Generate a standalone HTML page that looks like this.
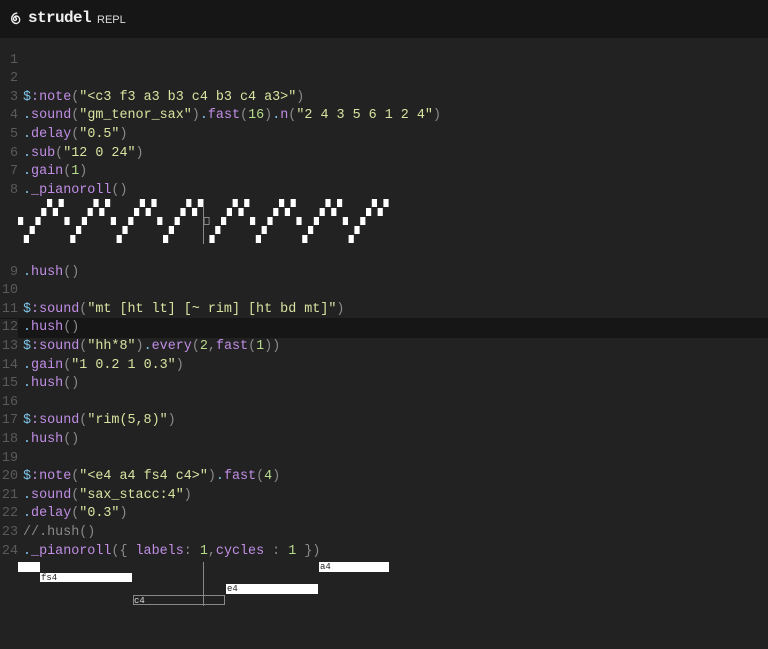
<!DOCTYPE html>
<html><head><meta charset="utf-8"><style>
*{margin:0;padding:0;box-sizing:border-box}
body{width:768px;height:649px;background:#222222;overflow:hidden;position:relative;font-family:"Liberation Mono",monospace;font-size:13.4px;color:#d0d0d0}
.hdr{position:absolute;left:0;top:0;width:768px;height:38px;background:#161616}
.hdr .t{position:absolute;left:28px;top:9px;font-family:"Liberation Mono",monospace;font-weight:bold;font-size:16px;color:#eee;letter-spacing:-0.6px}
.hdr .r{position:absolute;left:97px;top:14px;font-family:"Liberation Sans",sans-serif;font-size:11px;color:#ddd}
.l{position:absolute;left:0;height:18.6px;line-height:18.6px;white-space:pre;width:768px;margin-top:1.5px}
.n{display:inline-block;width:18px;text-align:right;color:#5a5a5a;margin-right:5px}
.d{color:#7cc2e6}.k{color:#c18ee6}.s{color:#d9e2a0}.p{color:#8a8a8a}.m{color:#b8dc8c}.c{color:#888}
.hl{background:#161616;margin-top:0;padding-top:1.5px;height:20px}
</style></head><body>
<div class="hdr">
<svg style="position:absolute;left:8px;top:12px" width="14" height="14" viewBox="0 0 14 14"><path d="M7 7 m0 -1.5 a1.5 1.5 0 1 1 -1.5 1.5 a3 3 0 0 1 3 -3 a3.8 3.8 0 0 1 0 7.5 a4.8 4.8 0 0 1 -4.8 -4.8 a5.6 5.6 0 0 1 5.6 -5.6" fill="none" stroke="#eee" stroke-width="1.4"/></svg>
<div class="t">strudel</div><div class="r">REPL</div></div>

<div class="l" style="top:50px"><span class="n">1</span></div>
<div class="l" style="top:68.6px"><span class="n">2</span></div>
<div class="l" style="top:87.2px"><span class="n">3</span><span class="d">$</span><span class="k">:note</span><span class="p">(</span><span class="s">"&lt;c3 f3 a3 b3 c4 b3 c4 a3&gt;"</span><span class="p">)</span></div>
<div class="l" style="top:105.8px"><span class="n">4</span><span class="d">.</span><span class="k">sound</span><span class="p">(</span><span class="s">"gm_tenor_sax"</span><span class="p">)</span><span class="d">.</span><span class="k">fast</span><span class="p">(</span><span class="m">16</span><span class="p">)</span><span class="d">.</span><span class="k">n</span><span class="p">(</span><span class="s">"2 4 3 5 6 1 2 4"</span><span class="p">)</span></div>
<div class="l" style="top:124.4px"><span class="n">5</span><span class="d">.</span><span class="k">delay</span><span class="p">(</span><span class="s">"0.5"</span><span class="p">)</span></div>
<div class="l" style="top:143px"><span class="n">6</span><span class="d">.</span><span class="k">sub</span><span class="p">(</span><span class="s">"12 0 24"</span><span class="p">)</span></div>
<div class="l" style="top:161.6px"><span class="n">7</span><span class="d">.</span><span class="k">gain</span><span class="p">(</span><span class="m">1</span><span class="p">)</span></div>
<div class="l" style="top:180.2px"><span class="n">8</span><span class="d">.</span><span class="k">_pianoroll</span><span class="p">()</span></div>

<svg style="position:absolute;left:0;top:0" width="768" height="649">
<defs><g id="cy" fill="#fff">
<rect x="0" y="217" width="5.2" height="8"/>
<rect x="5.8" y="235" width="5.2" height="8"/>
<rect x="11.6" y="226" width="5.2" height="8"/>
<rect x="17.4" y="217" width="5.2" height="8"/>
<rect x="23.2" y="208" width="5.2" height="8"/>
<rect x="29" y="199" width="5.2" height="8"/>
<rect x="34.8" y="208" width="5.2" height="8"/>
<rect x="40.6" y="199" width="5.2" height="8"/>
</g></defs>
<use href="#cy" x="18"/><use href="#cy" x="64.4"/><use href="#cy" x="110.8"/><use href="#cy" x="157.2"/>
<use href="#cy" x="203.6"/>
<rect x="203.6" y="216" width="6" height="10" fill="#222"/>
<rect x="204.1" y="217.5" width="5" height="7" fill="none" stroke="#888" stroke-width="1"/>
<use href="#cy" x="250"/><use href="#cy" x="296.4"/><use href="#cy" x="342.8"/>
<line x1="203.5" y1="199" x2="203.5" y2="244" stroke="#888" stroke-width="1"/>

<rect x="18" y="562" width="22" height="10" fill="#fff"/>
<rect x="40" y="573" width="92" height="9" fill="#fff"/>
<rect x="133.5" y="595.5" width="91" height="9" fill="none" stroke="#888"/>
<rect x="226" y="584" width="92" height="10" fill="#fff"/>
<rect x="319" y="562" width="70" height="10" fill="#fff"/>
<line x1="203.5" y1="562" x2="203.5" y2="606" stroke="#888"/>
<g font-family="Liberation Mono,monospace" font-size="9" fill="#222">
<text x="41" y="580">fs4</text><text x="227" y="591">e4</text><text x="320" y="569">a4</text></g>
<text x="134" y="603" font-family="Liberation Mono,monospace" font-size="9" fill="#ddd">c4</text>
</svg>

<div class="l" style="top:262px"><span class="n">9</span><span class="d">.</span><span class="k">hush</span><span class="p">()</span></div>
<div class="l" style="top:280.6px"><span class="n">10</span></div>
<div class="l" style="top:299.2px"><span class="n">11</span><span class="d">$</span><span class="k">:sound</span><span class="p">(</span><span class="s">"mt [ht lt] [~ rim] [ht bd mt]"</span><span class="p">)</span></div>
<div class="l hl" style="top:317.8px"><span class="n" style="background:#222">12</span><span class="d">.</span><span class="k">hush</span><span class="p">()</span></div>
<div class="l" style="top:336.4px"><span class="n">13</span><span class="d">$</span><span class="k">:sound</span><span class="p">(</span><span class="s">"hh*8"</span><span class="p">)</span><span class="d">.</span><span class="k">every</span><span class="p">(</span><span class="m">2</span><span class="p">,</span><span class="k">fast</span><span class="p">(</span><span class="m">1</span><span class="p">))</span></div>
<div class="l" style="top:355px"><span class="n">14</span><span class="d">.</span><span class="k">gain</span><span class="p">(</span><span class="s">"1 0.2 1 0.3"</span><span class="p">)</span></div>
<div class="l" style="top:373.6px"><span class="n">15</span><span class="d">.</span><span class="k">hush</span><span class="p">()</span></div>
<div class="l" style="top:392.2px"><span class="n">16</span></div>
<div class="l" style="top:410.8px"><span class="n">17</span><span class="d">$</span><span class="k">:sound</span><span class="p">(</span><span class="s">"rim(5,8)"</span><span class="p">)</span></div>
<div class="l" style="top:429.4px"><span class="n">18</span><span class="d">.</span><span class="k">hush</span><span class="p">()</span></div>
<div class="l" style="top:448px"><span class="n">19</span></div>
<div class="l" style="top:466.6px"><span class="n">20</span><span class="d">$</span><span class="k">:note</span><span class="p">(</span><span class="s">"&lt;e4 a4 fs4 c4&gt;"</span><span class="p">)</span><span class="d">.</span><span class="k">fast</span><span class="p">(</span><span class="m">4</span><span class="p">)</span></div>
<div class="l" style="top:485.2px"><span class="n">21</span><span class="d">.</span><span class="k">sound</span><span class="p">(</span><span class="s">"sax_stacc:4"</span><span class="p">)</span></div>
<div class="l" style="top:503.8px"><span class="n">22</span><span class="d">.</span><span class="k">delay</span><span class="p">(</span><span class="s">"0.3"</span><span class="p">)</span></div>
<div class="l" style="top:522.4px"><span class="n">23</span><span class="c">//.hush()</span></div>
<div class="l" style="top:541px"><span class="n">24</span><span class="d">.</span><span class="k">_pianoroll</span><span class="p">({ </span><span class="k">labels</span><span class="p">: </span><span class="m">1</span><span class="p">,</span><span class="k">cycles</span><span class="p"> : </span><span class="m">1</span><span class="p"> })</span></div>
</body></html>
